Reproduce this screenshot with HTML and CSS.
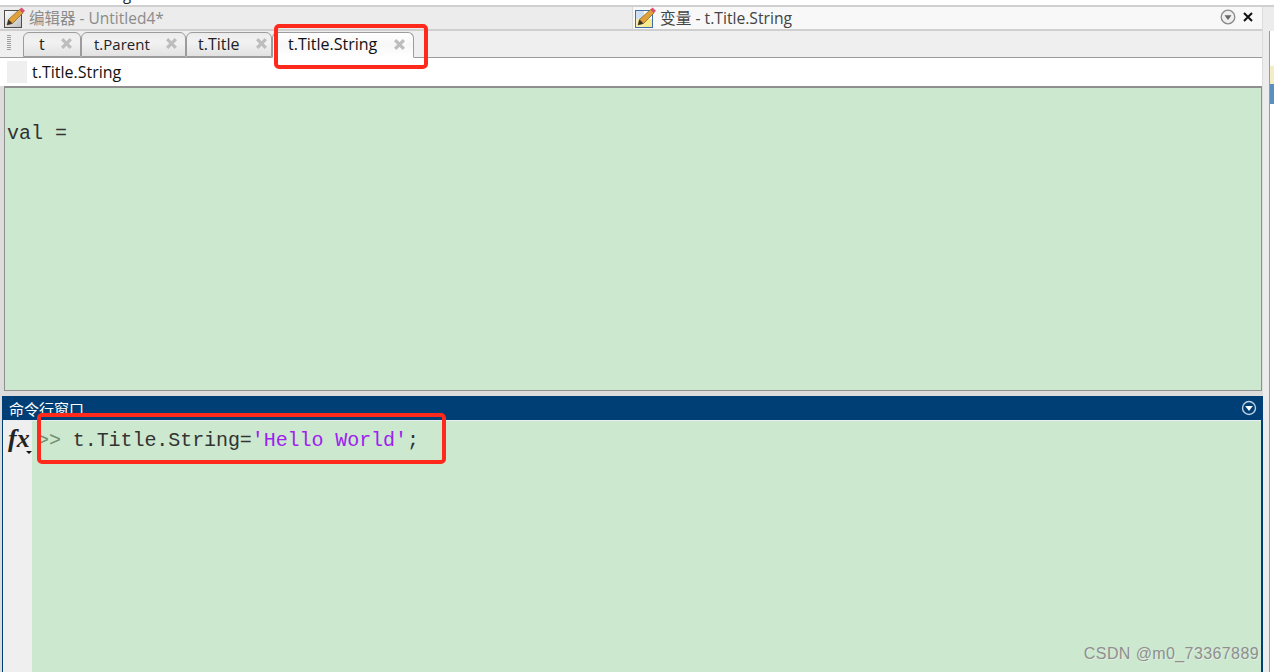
FILE: index.html
```html
<!DOCTYPE html>
<html lang="zh">
<head>
<meta charset="utf-8">
<title>MATLAB</title>
<link rel="stylesheet" href="styles.css">
</head>
<body>
<div class="app">
  <main class="main">
    <div class="top-strip"><span class="clip">g</span></div>
    <header class="titles">
      <div class="title-tab inactive">
        <svg class="doc-icon" viewBox="0 0 21 21"><defs><linearGradient id="pg" x1="0" y1="0" x2="1" y2="1"><stop offset="0" stop-color="#ffffff"/><stop offset="1" stop-color="#bdbdbd"/></linearGradient></defs><rect x="0.5" y="3.5" width="17" height="17" fill="url(#pg)" stroke="#4d4d4d"/><path d="M3 18 L4.5 12.5 L15.5 2.5 L19 6 L8.5 16.5 Z" fill="#e0a03a" stroke="#80602a" stroke-width=".7"/><path d="M15.5 2.5 L17.5 0.5 L21 3.8 L19 6 Z" fill="#dd4f72"/><path d="M3 18 L4.5 12.5 L8.5 16.5 Z" fill="#3a3226"/></svg>
        <span>编辑器 - Untitled4*</span>
      </div>
      <div class="title-tab active">
        <svg class="doc-icon" viewBox="0 0 21 21"><rect x="0.5" y="3.5" width="17" height="17" fill="#fff" stroke="#3f6fa8"/><rect x="1" y="4" width="8" height="8" fill="#cfe0f2"/><rect x="9" y="12" width="8" height="8" fill="#f7e98e"/><rect x="1" y="12" width="8" height="8" fill="#f4eeb0"/><path d="M3 18 L4.5 12.5 L15.5 2.5 L19 6 L8.5 16.5 Z" fill="#e0a03a" stroke="#80602a" stroke-width=".7"/><path d="M15.5 2.5 L17.5 0.5 L21 3.8 L19 6 Z" fill="#dd4f72"/><path d="M3 18 L4.5 12.5 L8.5 16.5 Z" fill="#3a3226"/></svg>
        <span class="var-title">变量 - t.Title.String</span>
        <span class="spacer"></span>
        <svg class="menu-icon" viewBox="0 0 16 16"><circle cx="8" cy="8" r="6.8" fill="#efefef" stroke="#8a8a8a" stroke-width="1.3"/><path d="M4.5 6.2 H11.5 L8 11 Z" fill="#666"/></svg>
        <svg class="close-icon" viewBox="0 0 12 12"><path d="M2 2 L10 10 M10 2 L2 10" stroke="#111" stroke-width="2"/></svg>
      </div>
    </header>
    <nav class="tabs">
      <div class="grip"></div>
      <div class="tab tab-t"><span>t</span><svg class="x" viewBox="0 0 12 12"><path d="M2 2 L10 10 M10 2 L2 10" stroke="#bdbdbd" stroke-width="3"/></svg></div>
      <div class="tab tab-parent"><span>t.Parent</span><svg class="x" viewBox="0 0 12 12"><path d="M2 2 L10 10 M10 2 L2 10" stroke="#bdbdbd" stroke-width="3"/></svg></div>
      <div class="tab tab-title"><span>t.Title</span><svg class="x" viewBox="0 0 12 12"><path d="M2 2 L10 10 M10 2 L2 10" stroke="#bdbdbd" stroke-width="3"/></svg></div>
      <div class="tab tab-string"><span>t.Title.String</span><svg class="x" viewBox="0 0 12 12"><path d="M2 2 L10 10 M10 2 L2 10" stroke="#bdbdbd" stroke-width="3"/></svg></div>
    </nav>
    <div class="path-row"><div class="path-box"></div><span>t.Title.String</span></div>
    <section class="var-panel"><pre class="code">val =</pre></section>
    <div class="gap"></div>
    <section class="cmd">
      <header class="cmd-head">
        <span>命令行窗口</span>
        <svg class="cmd-menu" viewBox="0 0 16 16"><circle cx="8" cy="8" r="6.5" fill="none" stroke="#bcd0e2" stroke-width="1.4"/><path d="M4.2 6 H11.8 L8 11 Z" fill="#fff"/></svg>
      </header>
      <div class="cmd-body">
        <div class="gutter"><span class="fx">fx</span><span class="fx-arrow"></span></div>
        <pre class="prompt"><span class="chev">&gt;&gt;</span> t.Title.String=<span class="str">'Hello World'</span>;</pre>
      </div>
    </section>
  </main>
  <aside class="side">
    <div class="side-top"></div>
    <div class="side-inner">
      <div class="side-yellow"></div>
      <div class="side-blue"></div>
    </div>
  </aside>
  <div class="mark mark-tab"></div>
  <div class="mark mark-cmd"></div>
  <div class="watermark">CSDN @m0_73367889</div>
</div>
</body>
</html>
```
FILE: styles.css
```css
* { box-sizing: border-box; }
html, body { margin: 0; height: 100%; overflow: hidden; }
body { background: #fff; font-family: "Open Sans", "Noto Sans CJK SC", sans-serif; }
.app { position: relative; display: flex; width: 1274px; height: 672px; }
.main { width: 1263px; display: flex; flex-direction: column; background: #dcdcdc; }
.top-strip { height: 7px; background: #fff; border-bottom: 2px solid #d0d0d0; overflow: hidden; padding-left: 123px; }
.clip { display: block; margin-top: -14px; font-size: 15px; line-height: 16px; color: #222; }
.titles { height: 24px; display: flex; border-bottom: 2px solid #cfcfcf; margin-right: 1px; }
.title-tab { display: flex; align-items: center; padding-bottom: 2px; font-size: 15.5px; white-space: nowrap; }
.title-tab.inactive { width: 632px; padding-left: 4px; background: #ececec; color: #8b8b8b; }
.title-tab.active { flex: 1; padding-left: 2px; background: #f8f8f8; color: #444; border-left: 1px solid #d8d8d8; }
.doc-icon { width: 21px; height: 21px; flex: none; margin-right: 4px; }
.var-title { font-size: 15.7px; }
.spacer { flex: 1; }
.menu-icon { width: 16px; height: 16px; margin-right: 6px; }
.close-icon { width: 12px; height: 12px; margin-right: 8px; }
.tabs { height: 27px; display: flex; align-items: flex-end; background: #efefef; border-bottom: 1px solid #9c9c9c; padding-left: 7px; margin-right: 1px; }
.grip { width: 4px; height: 16px; margin: 0 12px 6px 0; background: repeating-linear-gradient(#9e9e9e 0 1px, #efefef 1px 2px); }
.tab { height: 25px; display: flex; align-items: center; justify-content: space-between; padding-bottom: 2px; font-size: 16px; color: #222; background: linear-gradient(#ececec, #f2f2f2 40%, #e2e2e2); border: 1px solid #9c9c9c; border-radius: 6px 6px 0 0; white-space: nowrap; }
.tab-t { width: 58px; padding-left: 15px; padding-right: 7px; }
.tab-parent { width: 105px; padding-left: 12px; padding-right: 7px; font-size: 15px; }
.tab-title { width: 86px; padding-left: 11px; padding-right: 3px; }
.tab-string { width: 142px; padding-left: 15px; padding-right: 7px; background: linear-gradient(#fff, #f7f7f7 50%, #fff); border-bottom-color: #fff; margin-bottom: -1px; height: 26px; color: #111; }
.x { width: 13px; height: 13px; flex: none; }
.path-row { height: 28px; display: flex; align-items: center; background: #fff; padding-left: 7px; font-size: 16px; color: #111; margin-right: 1px; }
.path-box { width: 20px; height: 22px; background: #efefef; margin-right: 5px; }
.var-panel { height: 305px; background: #cce8cf; border: 1px solid #8f8f8f; border-top: 2px solid #8f8f8f; margin: 0 1px 0 4px; }
.code { margin: 0; padding: 31px 0 0 2px; font: 20px/29px "Liberation Mono", "DejaVu Sans Mono", monospace; color: #333; }
.gap { height: 5px; }
.cmd { flex: 1; display: flex; flex-direction: column; background: #003f75; margin-left: 2px; padding: 0 2px 0 1px; min-height: 0; }
.cmd-head { height: 25px; display: flex; align-items: center; justify-content: space-between; color: #fff; font-size: 15px; padding: 0 4px 0 6px; border-bottom: 1px solid #e8eef3; }
.cmd-menu { width: 16px; height: 16px; }
.cmd-body { flex: 1; display: flex; background: #cce8cf; }
.gutter { position: relative; width: 29px; background: #efefef; }
.fx { position: absolute; left: 5px; top: 3px; font: italic bold 26px/30px "Liberation Serif", serif; color: #222; }
.fx-arrow { position: absolute; left: 23px; top: 30px; border: 3px solid transparent; border-top-color: #111; }
.prompt { margin: 0; padding-left: 5px; font: 20px/39px "Liberation Mono", "DejaVu Sans Mono", monospace; letter-spacing: -0.07px; color: #333; }
.chev { color: #6f8f70; }
.str { color: #a020f0; }
.side { flex: 1; display: flex; flex-direction: column; background: #ececec; }
.side-top { height: 7px; background: #fff; border-bottom: 2px solid #d0d0d0; }
.side-inner { flex: 1; background: #fff; border-left: 1px solid #9a9a9a; margin: 24px 0 0 6px; }
.side-yellow { height: 18px; margin-top: 35px; background: #f3ecc4; }
.side-blue { height: 20px; background: #5b8fc4; }
.mark { position: absolute; border: 4px solid #ff2a1c; border-radius: 5px; }
.mark-tab { left: 274px; top: 24px; width: 154px; height: 45px; }
.mark-cmd { left: 37px; top: 413px; width: 409px; height: 51px; }
.watermark { position: absolute; right: 15px; top: 644px; font: 16px/20px "Liberation Sans", sans-serif; color: #8f8f8f; letter-spacing: 0.4px; text-shadow: 1px 1px 0 #e0eee0; }
```
